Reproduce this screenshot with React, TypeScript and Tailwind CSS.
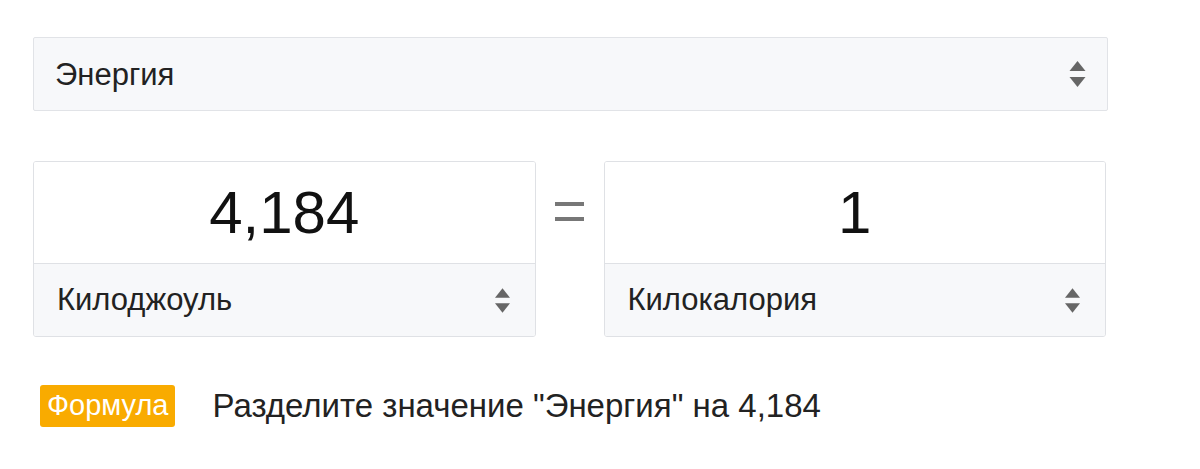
import React from "react"

function SortArrows({ className = "" }: { className?: string }) {
  return (
    <svg viewBox="0 0 16 26" className={className} fill="#666">
      <path d="M8 0 L16 10 L0 10 Z" />
      <path d="M0 16 L16 16 L8 26 Z" />
    </svg>
  )
}

function UnitCard({ value, unit }: { value: string; unit: string }) {
  return (
    <div className="flex-1 rounded-[3px] border border-[#dfe1e5] overflow-hidden">
      <div className="h-[101px] bg-white flex items-center justify-center text-[60px] text-[#111] leading-none">
        {value}
      </div>
      <div className="h-[73px] bg-[#f7f8fa] border-t border-[#dfe1e5] flex items-center justify-between pl-[23px] pr-[25px]">
        <span className="text-[31px] text-[#222]">{unit}</span>
        <SortArrows className="w-[15px] h-[25px]" />
      </div>
    </div>
  )
}

export default function App() {
  return (
    <div
      className="w-[1200px] h-[469px] bg-white pt-[37px] pl-[33px]"
      style={{ fontFamily: '"Liberation Sans", Arial, sans-serif' }}
    >
      <div className="w-[1075px]">
        <div className="h-[74px] bg-[#f7f8fa] border border-[#e1e3e7] rounded-[2px] flex items-center justify-between pl-[21px] pr-[21px]">
          <span className="text-[31px] text-[#222] mt-[3px]">Энергия</span>
          <SortArrows className="w-[17px] h-[26px]" />
        </div>

        <div className="mt-[50px] flex items-start pr-[2px]">
          <UnitCard value="4,184" unit="Килоджоуль" />
          <div className="w-[68px] h-[101px] flex flex-col items-center justify-center gap-[11px]">
            <div className="w-[29px] h-[4px] bg-[#777]" />
            <div className="w-[29px] h-[4px] bg-[#777]" />
          </div>
          <UnitCard value="1" unit="Килокалория" />
        </div>

        <div className="mt-[44px] flex items-center">
          <span className="ml-[7px] h-[42px] px-[7px] rounded-[3px] bg-[#f9ab00] text-white text-[29px] flex items-center">
            Формула
          </span>
          <span className="ml-[37px] text-[33px] text-[#222]">
            Разделите значение "Энергия" на 4,184
          </span>
        </div>
      </div>
    </div>
  )
}
